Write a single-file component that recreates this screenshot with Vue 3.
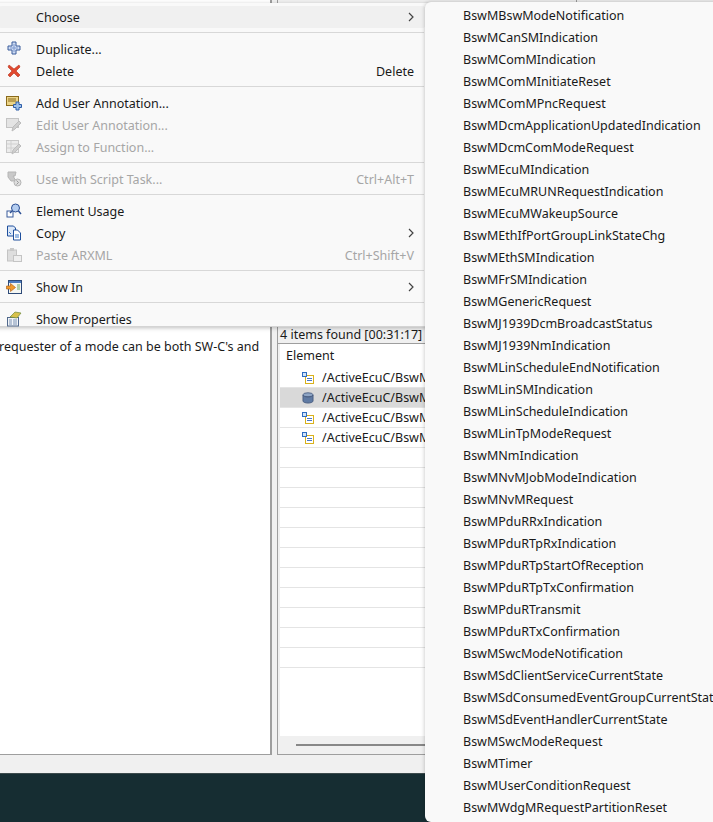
<template>
  <div class="screen">
    <div class="workbench">
      <div class="panes">
        <div class="pane text-pane">
          <p class="desc">requester of a mode can be both SW-C's and</p>
        </div>
        <div class="pane result-pane">
          <div class="found">4 items found [00:31:17]</div>
          <div class="table">
            <div class="table-head">Element</div>
            <div v-for="(row, i) in rows" :key="i" :class="['table-row', { picked: row.picked }]">
              <template v-if="row.path">
                <svg v-if="row.picked" class="row-icon" viewBox="0 0 12 12">
                  <ellipse cx="6" cy="2.8" rx="5" ry="2" fill="#8fa6c6" stroke="#54688a" />
                  <path d="M1 3v6c0 1.2 2.2 2 5 2s5-.8 5-2V3c0 1.2-2.2 2-5 2S1 4.200 1 3z" fill="#5f7aa3" stroke="#4b5f82" />
                </svg>
                <svg v-else class="row-icon" viewBox="0 0 12 12">
                  <rect x="3.500" y="3.500" width="8" height="8" fill="#fff" stroke="#d9b21c" />
                  <rect x="5" y="6" width="5" height="1" fill="#4a78c8" />
                  <rect x="5" y="8" width="5" height="1" fill="#4a78c8" />
                  <rect x=".5" y=".5" width="4" height="4" fill="#cfe3fa" stroke="#2e6cc0" />
                </svg>
                <span>{{ row.path }}</span>
              </template>
            </div>
          </div>
          <div class="scroll-strip"><div class="scroll-thumb"></div></div>
        </div>
      </div>
      <div class="status"></div>
    </div>
    <div class="desktop"></div>

    <div class="menu">
      <template v-for="(item, i) in menu" :key="i">
        <div v-if="item.sep" class="sep"></div>
        <div v-else :class="['item', { off: item.off, hot: item.hot }]">
          <span class="slot"><svg v-if="item.icon" viewBox="0 0 16 16" class="ico" v-html="icons[item.icon]"></svg></span>
          <span class="label">{{ item.label }}</span>
          <span v-if="item.key" class="key">{{ item.key }}</span>
          <svg v-if="item.more" class="more" viewBox="0 0 6 10"><path d="M1 1l4 4-4 4" fill="none" stroke="#444" stroke-width="1.200" /></svg>
        </div>
      </template>
    </div>

    <div class="submenu">
      <div v-for="name in modes" :key="name" class="sub-item">{{ name }}</div>
    </div>
  </div>
</template>

<script setup>
const rows = []
for (let i = 0; i < 15; i++) {
  rows.push({ path: i < 4 ? '/ActiveEcuC/BswMode' : '', picked: i === 1 })
}

const icons = {
  duplicate: '<path d="M6 1h4v4h4v4h-4v4H6V9H2V5h4z" fill="#cfdcf2" stroke="#3a5c9c"/><path d="M4 7h8M8 3v8" stroke="#7f9ad0"/>',
  del: '<path d="M3 2l5 4 5-4 1 2-4 4 4 4-2 2-4-4-4 4-2-2 4-4-4-4z" fill="#e0492f" stroke="#b5301c" stroke-width=".6"/>',
  add: '<rect x=".5" y="1.500" width="12" height="9" fill="#ecd487" stroke="#8a6a1c"/><path d="M2 4h8M2 6h8" stroke="#8a6a1c"/><path d="M10 7h3v2.500h2.500v3H13V15h-3v-2.500H7.500v-3H10z" fill="#9cc0ea" stroke="#2f5ea8"/>',
  edit: '<rect x=".5" y="1.500" width="12" height="9" fill="#e4e4e4" stroke="#c4c4c4"/><path d="M6 14l1-4 6-6 2 2-6 6z" fill="#cfcfcf" stroke="#bdbdbd"/>',
  assign: '<rect x=".5" y="1.500" width="12" height="12" fill="#ececec" stroke="#c8c8c8"/><path d="M1 5h11M1 9h11M5 2v11" stroke="#d0d0d0"/><path d="M6 15l1-4 6-6 2 2-6 6z" fill="#cfcfcf" stroke="#bdbdbd"/>',
  script: '<path d="M2 1h8l-1 4H7l3 5H5L2 6z" fill="#c9c9c9" stroke="#b5b5b5"/><circle cx="11.500" cy="11.500" r="3.500" fill="#dedede" stroke="#b5b5b5"/><path d="M10.500 9.500l2 2-2 2" fill="none" stroke="#999"/>',
  usage: '<rect x="1" y="8" width="6" height="6" fill="#fff" stroke="#3a5c9c"/><circle cx="9.500" cy="5" r="4" fill="#b4cdf0" stroke="#2c4f94"/><path d="M6 8l-2 2M12.500 8l2.500 3" stroke="#2c4f94" stroke-width="1.500"/>',
  copy: '<path d="M1.500 1h6l2 2v8h-8z" fill="#dce8f8" stroke="#1f4f9c"/><path d="M7.500 5h4l3 3v7h-7z" fill="#fff" stroke="#1f4f9c"/><path d="M3 7l2 2M9 10h4M9 12h4" stroke="#3a78c8"/>',
  paste: '<rect x="1.500" y="3" width="9" height="11" fill="#dedede" stroke="#c4c4c4"/><rect x="4" y="1" width="4" height="3" fill="#c8c8c8"/><rect x="7.500" y="8.500" width="8" height="6" fill="#efefef" stroke="#c4c4c4"/>',
  showin: '<rect x="2.500" y="1.500" width="13" height="13" fill="#f4f6f2" stroke="#2d4a78"/><rect x="3" y="2" width="12" height="2" fill="#4d7cc0"/><path d="M11 6h3M11 8h3M11 10h3" stroke="#6fa860"/><path d="M.5 7h4V4.500L9.500 8.500l-5 4V10h-4z" fill="#f09a2c" stroke="#b5641a" stroke-width=".7"/>',
  props: '<rect x="1.500" y="6.500" width="11" height="8.500" fill="#f1f4f8" stroke="#50688c"/><path d="M3 9h3M7 9h4M3 11h3M7 11h4M3 13h3M7 13h4" stroke="#7d93b4"/><path d="M4 6l5-5 6 1-4 5z" fill="#d8c14a" stroke="#6f8a3a" stroke-width=".7"/>'
}

const menu = [
  { label: 'Choose', more: true, hot: true },
  { sep: true },
  { label: 'Duplicate...', icon: 'duplicate' },
  { label: 'Delete', icon: 'del', key: 'Delete' },
  { sep: true },
  { label: 'Add User Annotation...', icon: 'add' },
  { label: 'Edit User Annotation...', icon: 'edit', off: true },
  { label: 'Assign to Function...', icon: 'assign', off: true },
  { sep: true },
  { label: 'Use with Script Task...', icon: 'script', off: true, key: 'Ctrl+Alt+T' },
  { sep: true },
  { label: 'Element Usage', icon: 'usage' },
  { label: 'Copy', icon: 'copy', more: true },
  { label: 'Paste ARXML', icon: 'paste', off: true, key: 'Ctrl+Shift+V' },
  { sep: true },
  { label: 'Show In', icon: 'showin', more: true },
  { sep: true },
  { label: 'Show Properties', icon: 'props' }
]

const modes = [
  'BswMBswModeNotification', 'BswMCanSMIndication', 'BswMComMIndication', 'BswMComMInitiateReset',
  'BswMComMPncRequest', 'BswMDcmApplicationUpdatedIndication', 'BswMDcmComModeRequest', 'BswMEcuMIndication',
  'BswMEcuMRUNRequestIndication', 'BswMEcuMWakeupSource', 'BswMEthIfPortGroupLinkStateChg', 'BswMEthSMIndication',
  'BswMFrSMIndication', 'BswMGenericRequest', 'BswMJ1939DcmBroadcastStatus', 'BswMJ1939NmIndication',
  'BswMLinScheduleEndNotification', 'BswMLinSMIndication', 'BswMLinScheduleIndication', 'BswMLinTpModeRequest',
  'BswMNmIndication', 'BswMNvMJobModeIndication', 'BswMNvMRequest', 'BswMPduRRxIndication',
  'BswMPduRTpRxIndication', 'BswMPduRTpStartOfReception', 'BswMPduRTpTxConfirmation', 'BswMPduRTransmit',
  'BswMPduRTxConfirmation', 'BswMSwcModeNotification', 'BswMSdClientServiceCurrentState',
  'BswMSdConsumedEventGroupCurrentState', 'BswMSdEventHandlerCurrentState', 'BswMSwcModeRequest', 'BswMTimer',
  'BswMUserConditionRequest', 'BswMWdgMRequestPartitionReset'
]
</script>

<style>
html, body { margin: 0; overflow: hidden; }
</style>

<style scoped>
.screen {
  position: relative;
  width: 713px;
  height: 822px;
  overflow: hidden;
  display: flex;
  flex-direction: column;
  background: #f0f0f0;
  font-family: "Noto Sans", "Liberation Sans", sans-serif;
  font-size: 12.500px;
  color: #1a1a1a;
}
.workbench {
  height: 774px;
  display: flex;
  flex-direction: column;
  border-bottom: 1px solid #3c4a4c;
  box-sizing: border-box;
}
.panes {
  height: 755px;
  display: flex;
  gap: 4px;
}
.pane {
  box-sizing: border-box;
  border: 1px solid #9e9e9e;
  border-top: 0;
}
.text-pane {
  width: 274px;
  margin-left: -2px;
  border-bottom-width: 1px;
  background: #fff;
  padding-top: 336px;
  border-right-width: 2px;
}
.desc { margin: 0; white-space: nowrap; line-height: 20px; padding-top: 1px; }
.result-pane {
  width: 300px;
  margin-left: 1px;
  display: flex;
  flex-direction: column;
  padding-top: 326px;
}
.found {
  height: 17px;
  line-height: 17px;
  padding-left: 2px;
  border-bottom: 1px solid #9e9e9e;
}
.table { margin-left: 2px; background: #fff; flex: 1; overflow: hidden; }
.table-head { height: 24px; line-height: 24px; padding-left: 6px; }
.table-row {
  height: 20px;
  box-sizing: border-box;
  border-bottom: 1px solid #e4e4e4;
  display: flex;
  align-items: center;
  padding-left: 22px;
  white-space: nowrap;
}
.picked { background: #d9d9d9; }
.row-icon { width: 12px; height: 12px; margin-right: 8px; flex: none; }
.scroll-strip { height: 18px; display: flex; align-items: center; padding-left: 18px; }
.scroll-thumb { width: 200px; height: 2px; background: #888; }
.status { flex: 1; }
.desktop { flex: 1; background: #162d32; }

.menu {
  position: absolute;
  left: -6px;
  top: 3px;
  width: 436px;
  height: 324px;
  box-sizing: border-box;
  padding: 3px 4px;
  background: #f9f9f9;
  border-bottom: 1px solid #d4d4d4;
  box-shadow: 0 1px 4px rgba(0, 0, 0, .25);
}
.item {
  display: flex;
  align-items: center;
  height: 22px;
  padding-right: 12px;
  border-radius: 4px;
}
.hot { background: #f0f0f0; }
.off { color: #a6a6a6; }
.slot { width: 38px; flex: none; display: flex; justify-content: flex-end; padding-right: 8px; box-sizing: border-box; }
.ico { width: 16px; height: 16px; margin-right: 6px; }
.label { flex: 1; white-space: nowrap; }
.key { color: inherit; }
.more { width: 6px; height: 10px; margin-left: 4px; }
.sep { height: 1px; background: #d8d8d8; margin: 4px 2px 5px 2px; }

.submenu {
  position: absolute;
  left: 425px;
  top: 2px;
  width: 300px;
  height: 820px;
  box-sizing: border-box;
  padding: 3px 0 0 38px;
  background: #f9f9f9;
  border-radius: 6px 0 0 6px;
  box-shadow: 0 0 4px rgba(0, 0, 0, .25);
}
.sub-item { height: 22px; line-height: 22px; white-space: nowrap; }
</style>
